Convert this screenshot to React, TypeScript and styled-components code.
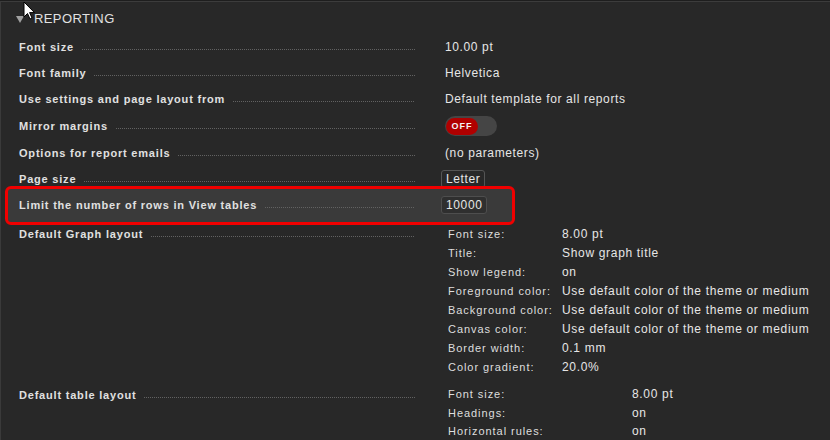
import React from "react";
import styled, { createGlobalStyle } from "styled-components";

const Global = createGlobalStyle`
  html, body { margin: 0; padding: 0; background: #1e1e1e; }
  body { font-family: "Liberation Sans", Arial, sans-serif; }
  #root { width: 830px; height: 440px; overflow: hidden; }
`;

const Panel = styled.div`
  position: relative;
  margin-top: 1px;
  height: 439px;
  box-sizing: border-box;
  background: #282828;
  border-top: 1px solid #3c3c3c;
  border-left: 1px solid #3a3a3a;
  padding-left: 18px;
  overflow: hidden;
`;

const Header = styled.div`
  display: flex;
  align-items: center;
  height: 32px;
  gap: 10px;
  color: #e2e2e2;
  font-size: 13px;
  letter-spacing: 0.4px;
`;

const Caret = styled.span`
  width: 0;
  height: 0;
  margin-left: -3px;
  margin-top: 3px;
  border-left: 4.5px solid transparent;
  border-right: 4.5px solid transparent;
  border-top: 7px solid #a0a0a0;
`;

const Row = styled.div<{ $h?: number; $top?: boolean; $hl?: boolean }>`
  position: relative;
  display: grid;
  grid-template-columns: 396px 1fr;
  column-gap: 30px;
  align-items: ${(p) => (p.$top ? "start" : "center")};
  min-height: ${(p) => p.$h ?? 26}px;
  ${(p) =>
    p.$hl &&
    `
    &::before {
      content: "";
      position: absolute;
      left: -14px;
      top: -6px;
      width: 510px;
      height: 39px;
      box-sizing: border-box;
      border: 3px solid #f00000;
      border-radius: 6px;
      background: #3a3a3a;
    }
  `}
  & > * { position: relative; }
`;

const LabelCell = styled.div<{ $lh?: number }>`
  display: flex;
  align-items: center;
  height: ${(p) => p.$lh ?? 26}px;
`;

const Label = styled.span`
  color: #e0e0e0;
  font-size: 11px;
  font-weight: bold;
  letter-spacing: 0.8px;
  white-space: nowrap;
`;

const Leader = styled.span`
  flex: 1;
  height: 1px;
  margin: 5px 0 0 8px;
  background-image: repeating-linear-gradient(
    to right,
    #626262 0 1px,
    transparent 1px 2px
  );
`;

const Value = styled.div`
  color: #e6e6e6;
  font-size: 12px;
  letter-spacing: 0.62px;
  white-space: nowrap;
`;

const Boxed = styled.span<{ $dark?: boolean }>`
  display: inline-block;
  margin-left: -4px;
  padding: 1px 4px 0;
  line-height: 15px;
  border: 1px solid ${(p) => (p.$dark ? "#4e4e4e" : "#555")};
  border-radius: 3px;
  background: ${(p) => (p.$dark ? "#2f2f2f" : "transparent")};
`;

const Toggle = styled.div`
  display: flex;
  align-items: center;
  width: 52px;
  height: 20px;
  border-radius: 10px;
  background: #454545;
  padding: 0 1px;
  box-sizing: border-box;
`;

const Knob = styled.span`
  width: 32px;
  height: 17px;
  border-radius: 9px;
  background: #b00000;
  color: #f4f4f4;
  font-size: 9px;
  font-weight: bold;
  letter-spacing: 1px;
  display: flex;
  align-items: center;
  justify-content: center;
`;

const Group = styled.div`
  padding: 6px 0 9px;
`;

const SubGrid = styled.div<{ $col: number; $rh?: number }>`
  display: grid;
  grid-template-columns: ${(p) => p.$col}px 1fr;
  grid-auto-rows: ${(p) => p.$rh ?? 19}px;
  align-items: center;
  padding-left: 3px;
  color: #dedede;
  font-size: 11px;
  letter-spacing: 0.95px;
  white-space: nowrap;
`;

const SubVal = styled.span`
  color: #e6e6e6;
  font-size: 12px;
  letter-spacing: 0.68px;
`;

const Cursor = styled.svg`
  position: absolute;
  left: 22px;
  top: -1px;
`;

const graph: [string, string][] = [
  ["Font size:", "8.00 pt"],
  ["Title:", "Show graph title"],
  ["Show legend:", "on"],
  ["Foreground color:", "Use default color of the theme or medium"],
  ["Background color:", "Use default color of the theme or medium"],
  ["Canvas color:", "Use default color of the theme or medium"],
  ["Border width:", "0.1 mm"],
  ["Color gradient:", "20.0%"],
];

const table: [string, string][] = [
  ["Font size:", "8.00 pt"],
  ["Headings:", "on"],
  ["Horizontal rules:", "on"],
];

function LabelWithLeader({ text, lh }: { text: string; lh?: number }) {
  return (
    <LabelCell $lh={lh}>
      <Label>{text}</Label>
      <Leader />
    </LabelCell>
  );
}

export default function App() {
  return (
    <>
      <Global />
      <Panel>
        <Header>
          <Caret />
          <span>REPORTING</span>
        </Header>
        <Row>
          <LabelWithLeader text="Font size" />
          <Value>10.00 pt</Value>
        </Row>
        <Row>
          <LabelWithLeader text="Font family" />
          <Value>Helvetica</Value>
        </Row>
        <Row>
          <LabelWithLeader text="Use settings and page layout from" />
          <Value>Default template for all reports</Value>
        </Row>
        <Row $h={28}>
          <LabelWithLeader text="Mirror margins" lh={28} />
          <Toggle>
            <Knob>OFF</Knob>
          </Toggle>
        </Row>
        <Row>
          <LabelWithLeader text="Options for report emails" />
          <Value>(no parameters)</Value>
        </Row>
        <Row>
          <LabelWithLeader text="Page size" />
          <Value>
            <Boxed>Letter</Boxed>
          </Value>
        </Row>
        <Row $hl>
          <LabelWithLeader text="Limit the number of rows in View tables" />
          <Value>
            <Boxed $dark>10000</Boxed>
          </Value>
        </Row>
        <Group>
          <Row $top>
            <LabelWithLeader text="Default Graph layout" lh={19} />
            <SubGrid $col={114}>
              {graph.map(([k, v]) => (
                <React.Fragment key={k}>
                  <span>{k}</span>
                  <SubVal>{v}</SubVal>
                </React.Fragment>
              ))}
            </SubGrid>
          </Row>
        </Group>
        <Row $top>
          <LabelWithLeader text="Default table layout" lh={19} />
          <SubGrid $col={184} $rh={18.5}>
            {table.map(([k, v]) => (
              <React.Fragment key={k}>
                <span>{k}</span>
                <SubVal>{v}</SubVal>
              </React.Fragment>
            ))}
          </SubGrid>
        </Row>
        <Cursor width="14" height="20" viewBox="0 0 14 20">
          <path
            d="M1 1 L1 16 L4.5 12.5 L7 18 L9 17 L6.6 11.6 L11.5 11.6 Z"
            fill="#ffffff"
            stroke="#000000"
            strokeWidth="1"
            strokeLinejoin="round"
          />
        </Cursor>
      </Panel>
    </>
  );
}
